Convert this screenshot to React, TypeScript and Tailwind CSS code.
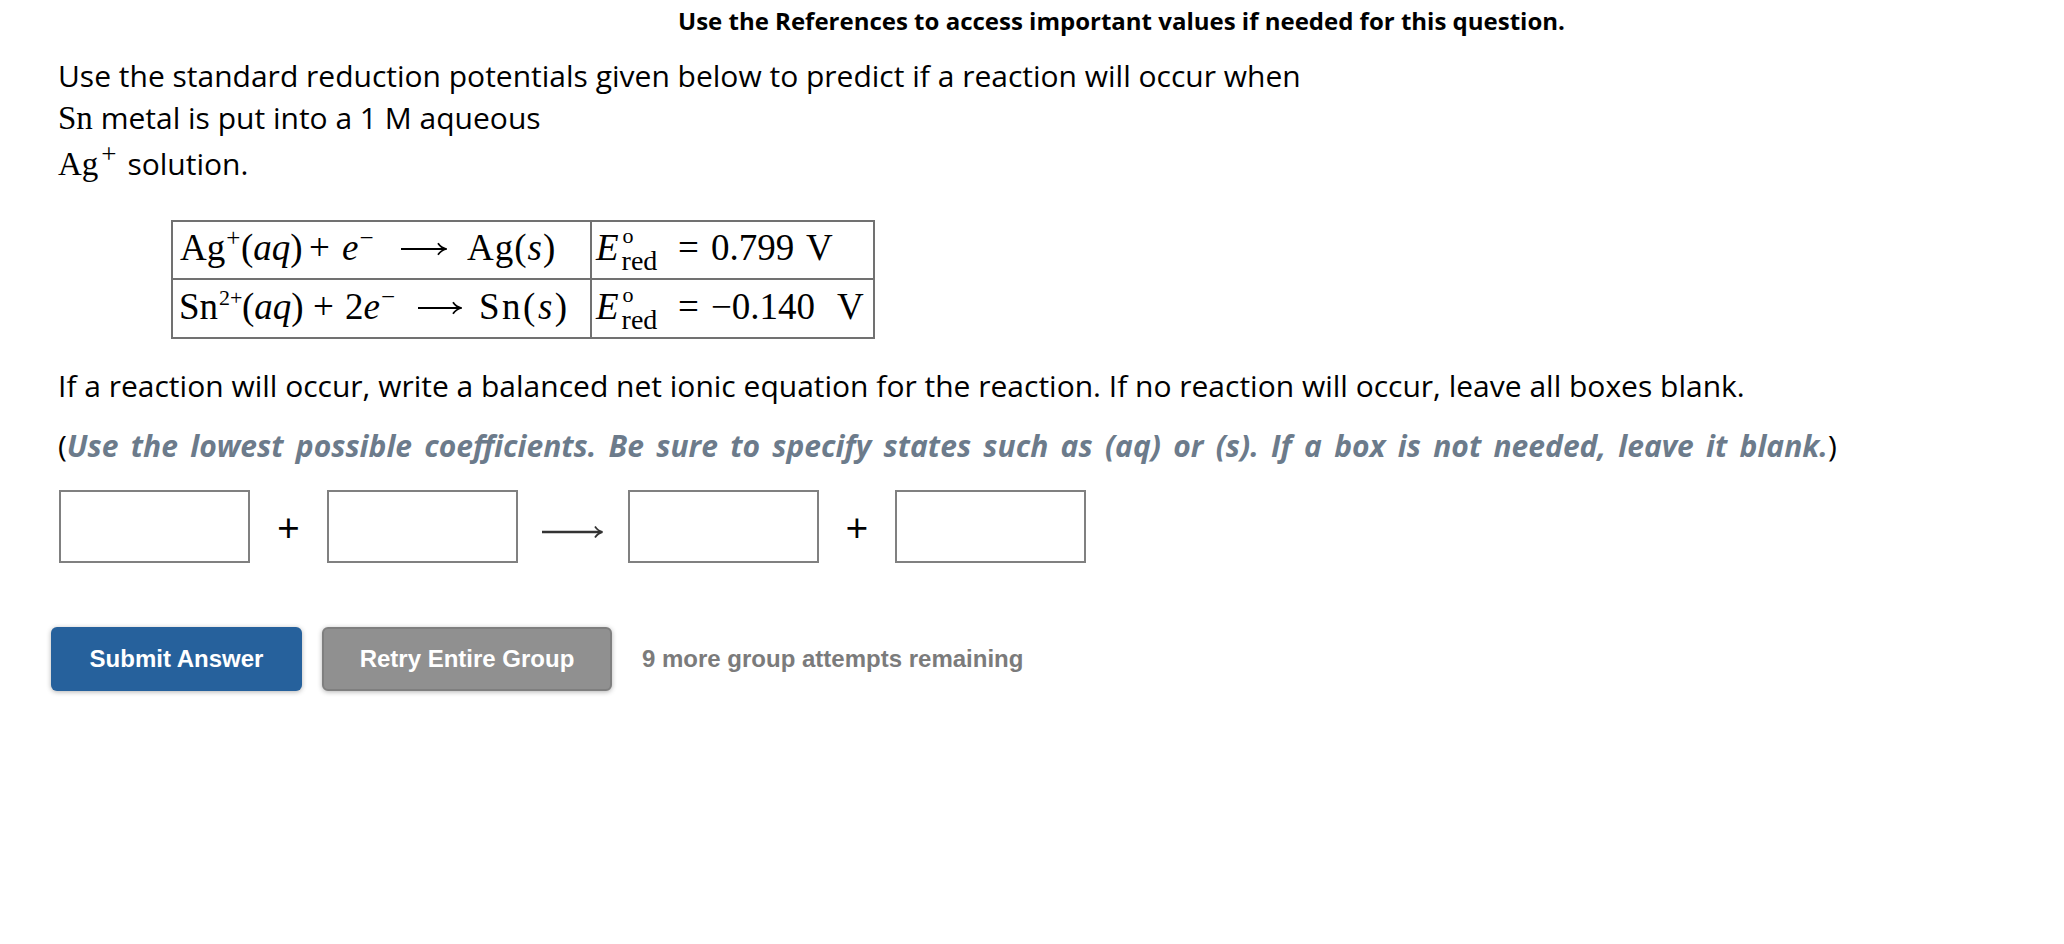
import React from "react";

function Sup({ children }: { children: React.ReactNode }) {
  return <span className="relative -top-[14px] ml-[1px] text-[25px] leading-none">{children}</span>;
}

function MathArrow({ w }: { w: number }) {
  return (
    <svg width={w} height="16" viewBox={`0 0 ${w} 16`} className="relative -top-[3px]">
      <line x1="0" y1="8" x2={w - 1.5} y2="8" stroke="#000" strokeWidth="1.8" />
      <path
        d={`M${w - 9} 2.2 Q${w - 6} 6.6 ${w - 0.8} 8 Q${w - 6} 9.4 ${w - 9} 13.8`}
        fill="none"
        stroke="#000"
        strokeWidth="1.8"
      />
    </svg>
  );
}

function Ered() {
  return (
    <span className="inline-flex items-baseline w-[82px]">
      <span className="italic">E</span>
      <span className="relative -top-[17px] ml-[3px] inline-flex flex-col items-start leading-none">
        <span className="ml-[1px] text-[22px] leading-none">o</span>
        <span className="text-[28px] leading-none">red</span>
      </span>
    </span>
  );
}

export default function App() {
  return (
    <div className="w-[2064px] h-[944px] bg-white text-black font-['Open_Sans',sans-serif] overflow-hidden">
      <div className="pt-[5px] pl-[678px] h-[37px] text-[24px] leading-[32px] font-bold">
        Use the References to access important values if needed for this question.
      </div>

      <div className="pl-[58px] mt-[18px] text-[30px] leading-[42px]">
        <div>Use the standard reduction potentials given below to predict if a reaction will occur when</div>
        <div>
          <span className="font-['Liberation_Serif',serif] text-[33px]">Sn</span> metal is put into a 1 M aqueous
        </div>
        <div className="pt-[4px]">
          <span className="font-['Liberation_Serif',serif] text-[33px]">
            Ag<span className="relative -top-[12px] ml-[3px] mr-[3px] text-[27px] leading-none">+</span>
          </span>{" "}
          solution.
        </div>
      </div>

      <div className="ml-[171px] mt-[35px] w-[704px] grid grid-cols-[417px_281px] grid-rows-[56px_57px] gap-[2px] p-[2px] bg-[#717171] font-['Liberation_Serif',serif] text-[37px] leading-none">
        <div className="bg-white pl-[7px] pt-[7px]">
          <div className="flex items-baseline">
            <span className="inline-block w-[61px] shrink-0">Ag<Sup>+</Sup></span>
            <span className="inline-block w-[66px] shrink-0">(<span className="italic">aq</span>)</span>
            <span className="inline-block w-[35px] shrink-0 pl-[2px]">+</span>
            <span className="inline-block w-[59px] shrink-0"><span className="italic">e</span><Sup>−</Sup></span>
            <span className="inline-block w-[66px] shrink-0"><MathArrow w={46} /></span>
            <span className="shrink-0 tracking-[1px]">Ag(<span className="italic">s</span>)</span>
          </div>
        </div>
        <div className="bg-white pl-[4px] pt-[7px]">
          <div className="flex items-baseline">
            <Ered />
            <span className="inline-block w-[33px]">=</span>
            <span className="inline-block w-[95px]">0.799</span>
            <span>V</span>
          </div>
        </div>
        <div className="bg-white pl-[6px] pt-[8px]">
          <div className="flex items-baseline">
            <span className="inline-block w-[63px] shrink-0">Sn<span className="relative -top-[14px] ml-[1px] text-[22px] leading-none">2+</span></span>
            <span className="inline-block w-[69px] shrink-0">(<span className="italic">aq</span>)</span>
            <span className="inline-block w-[34px] shrink-0 pl-[2px]">+</span>
            <span className="inline-block w-[73px] shrink-0">2<span className="italic">e</span><Sup>−</Sup></span>
            <span className="inline-block w-[61px] shrink-0"><MathArrow w={44} /></span>
            <span className="shrink-0 tracking-[2.5px]">Sn(<span className="italic">s</span>)</span>
          </div>
        </div>
        <div className="bg-white pl-[4px] pt-[8px]">
          <div className="flex items-baseline">
            <Ered />
            <span className="inline-block w-[33px]">=</span>
            <span className="inline-block w-[126px]">−0.140</span>
            <span>V</span>
          </div>
        </div>
      </div>

      <div className="pl-[58px] mt-[26px] text-[30px] leading-[42px]">
        If a reaction will occur, write a balanced net ionic equation for the reaction. If no reaction will occur, leave all boxes blank.
      </div>
      <div className="pl-[58px] mt-[18px] text-[30px] leading-[42px]">
        (<span className="font-bold italic text-[#6c7b8b] [word-spacing:4.5px]">Use the lowest possible coefficients. Be sure to specify states such as (aq) or (s). If a box is not needed, leave it blank.</span>)
      </div>

      <div className="pl-[59px] mt-[23px] flex items-center h-[73px]">
        <div className="w-[191px] h-[73px] border-2 border-[#808080] bg-white" />
        <div className="w-[77px] flex justify-center text-[40px] leading-none pt-[2px]">+</div>
        <div className="w-[191px] h-[73px] border-2 border-[#808080] bg-white" />
        <div className="w-[110px] flex justify-center pt-[10px]">
          <svg width="62" height="14" viewBox="0 0 62 14">
            <line x1="0" y1="7" x2="59" y2="7" stroke="#333" strokeWidth="2.4" />
            <path d="M53 1.5 Q56 6 60.5 7 Q56 8 53 12.5" fill="none" stroke="#333" strokeWidth="1.8" />
          </svg>
        </div>
        <div className="w-[191px] h-[73px] border-2 border-[#808080] bg-white" />
        <div className="w-[76px] flex justify-center text-[40px] leading-none pt-[2px]">+</div>
        <div className="w-[191px] h-[73px] border-2 border-[#808080] bg-white" />
      </div>

      <div className="pl-[51px] mt-[64px] flex items-center font-['Liberation_Sans',Arial,sans-serif] font-bold text-[24px]">
        <button className="w-[251px] h-[64px] rounded-[6px] bg-[#26619c] text-white shadow-[0_1px_5px_rgba(0,0,0,0.3)]">
          Submit Answer
        </button>
        <button className="ml-[20px] w-[290px] h-[64px] rounded-[6px] bg-[#909090] border-2 border-[#7f7f7f] text-white shadow-[0_1px_5px_rgba(0,0,0,0.3)]">
          Retry Entire Group
        </button>
        <span className="ml-[30px] text-[#7b7b7b]">9 more group attempts remaining</span>
      </div>
    </div>
  );
}
